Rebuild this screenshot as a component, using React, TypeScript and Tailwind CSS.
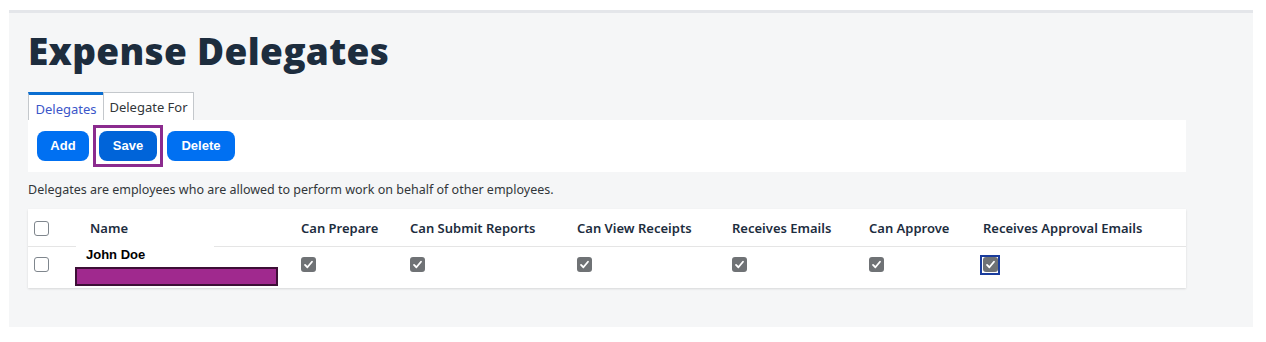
import React from "react";

const columns = [
  { label: "Name", width: "w-[211px]" },
  { label: "Can Prepare", width: "w-[109px]" },
  { label: "Can Submit Reports", width: "w-[167px]" },
  { label: "Can View Receipts", width: "w-[155px]" },
  { label: "Receives Emails", width: "w-[137px]" },
  { label: "Can Approve", width: "w-[114px]" },
  { label: "Receives Approval Emails", width: "flex-1" },
];

function EmptyBox() {
  return <span className="block w-[15px] h-[15px] rounded-[3px] border-[1.5px] border-[#7f868d] bg-white" />;
}

function CheckedBox({ focused }: { focused?: boolean }) {
  const box = (
    <span className="flex items-center justify-center w-[15px] h-[15px] rounded-[3px] bg-[#6f7275]">
      <svg width="11" height="11" viewBox="0 0 12 12">
        <path d="M2.2 6.4 L4.8 9 L9.8 3" fill="none" stroke="#fff" strokeWidth="2" strokeLinecap="round" strokeLinejoin="round" />
      </svg>
    </span>
  );
  if (!focused) return box;
  return <span className="flex items-center justify-center w-[20px] h-[20px] border-2 border-[#1a3c9c] -ml-[3px] -my-[2px]">{box}</span>;
}

export default function App() {
  return (
    <div className="w-[1266px] h-[342px] bg-white pt-[10px] pl-[9px]" style={{ fontFamily: '"Noto Sans", "Open Sans", sans-serif' }}>
      <div className="w-[1244px] h-[317px] bg-[#f5f6f7] border-t-[3px] border-[#e4e6ea] px-[19px]">
        <h1 className="text-[37px] leading-[46px] font-extrabold text-[#1d2d3e] pt-[15px] tracking-[0.3px]" style={{ fontFamily: '"Open Sans", sans-serif' }}>
          Expense Delegates
        </h1>

        <div className="flex mt-[18px] h-[28px] text-[13px]">
          <div className="w-[75px] bg-white border-t-[3px] border-[#0a6ed1] border-l border-l-[#c4c8cc] flex items-center justify-center text-[#3b56c9] pt-[4px]">
            Delegates
          </div>
          <div className="w-[91px] bg-white border border-[#c4c8cc] border-b-0 flex items-center justify-center text-[#32363a] pt-[2px]">
            Delegate For
          </div>
        </div>

        <div className="w-[1158px] h-[52px] bg-white flex items-start gap-[10px] pl-[9px] pt-[11px]" style={{ fontFamily: '"Liberation Sans", Arial, sans-serif' }}>
          <button className="h-[30px] w-[52px] rounded-[8px] bg-[#0070f2] text-white text-[13px] font-bold">Add</button>
          <div className="relative">
            <button className="h-[30px] w-[58px] rounded-[8px] bg-[#0064d9] text-white text-[13px] font-bold">Save</button>
            <span className="absolute -left-[6px] -top-[6px] w-[70px] h-[42px] border-[3px] border-[#8b2b8e]" />
          </div>
          <button className="h-[30px] w-[68px] rounded-[8px] bg-[#0070f2] text-white text-[13px] font-bold">Delete</button>
        </div>

        <p className="text-[12.5px] text-[#32363a] mt-[9px] leading-[17px]">
          Delegates are employees who are allowed to perform work on behalf of other employees.
        </p>

        <div className="relative w-[1158px] bg-white mt-[11px] shadow-[0_1px_2px_rgba(0,0,0,0.12)]">
          <div className="flex items-center h-[38px] border-b border-[#e5e5e5] text-[13px] font-semibold text-[#1d2d3e]">
            <div className="w-[62px] pl-[6px] pt-[2px]"><EmptyBox /></div>
            {columns.map((c) => (
              <div key={c.label} className={c.width + " pt-[3px]"}>{c.label}</div>
            ))}
          </div>
          <div className="flex items-center h-[41px] pb-[6px]">
            <div className="w-[62px] pl-[6px]"><EmptyBox /></div>
            <div className="w-[211px]" />
            <div className="w-[109px]"><CheckedBox /></div>
            <div className="w-[167px]"><CheckedBox /></div>
            <div className="w-[155px]"><CheckedBox /></div>
            <div className="w-[137px]"><CheckedBox /></div>
            <div className="w-[114px]"><CheckedBox /></div>
            <div className="flex-1"><CheckedBox focused /></div>
          </div>

          <div className="absolute left-[48px] top-[31px] w-[138px] h-[28px] bg-white pl-[10px] pt-[5px] text-[13px] font-bold text-black" style={{ fontFamily: '"Liberation Sans", Arial, sans-serif' }}>
            John Doe
          </div>
          <div className="absolute left-[47px] top-[58px] w-[203px] h-[19px] bg-[#a0298e] border-2 border-[#3d0f36]" />
        </div>
      </div>
    </div>
  );
}
